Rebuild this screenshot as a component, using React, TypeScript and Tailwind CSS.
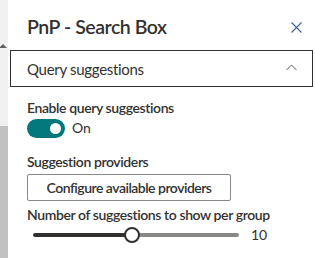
import React from "react";

export default function App() {
  const font = { fontFamily: 'Lato, "Noto Sans", sans-serif' };
  return (
    <div className="w-[315px] h-[258px] flex bg-white overflow-hidden text-[#323130]" style={font}>
      {/* scrollbar strip */}
      <div className="w-[8px] shrink-0 flex flex-col">
        <div className="h-[126px] shrink-0 bg-[#f0f0f0] relative">
          <div className="absolute left-0 top-[44px] w-0 h-0 border-l-[4px] border-r-[4px] border-b-[4px] border-l-transparent border-r-transparent border-b-[#606060] -ml-[1px]" />
        </div>
        <div className="flex-1 bg-[#c1c1c1]" />
      </div>
      {/* panel */}
      <div className="flex-1 pl-[2px] pr-[2px]">
        <div className="h-[50px] flex items-start justify-between pl-[17px] pr-[11px]">
          <div className="mt-[13px] text-[19.5px] leading-[28px] font-semibold tracking-[-0.45px] text-[#323130]">PnP - Search Box</div>
          <svg className="mt-[22px]" width="11" height="11" viewBox="0 0 11 11">
            <path d="M0.5 0.5 L10.5 10.5 M10.5 0.5 L0.5 10.5" stroke="#35639a" strokeWidth="1.1" fill="none" />
          </svg>
        </div>
        <div className="h-[37px] border border-[#323130] flex items-center justify-between pl-[16px] pr-[15px]">
          <span className="text-[15px] leading-[20px] tracking-[-0.3px]">Query suggestions</span>
          <svg width="11" height="7" viewBox="0 0 11 7" className="-mt-[2px]">
            <path d="M0.5 6 L5.5 1 L10.5 6" stroke="#605e5c" strokeWidth="1" fill="none" />
          </svg>
        </div>
        <div className="flex flex-col pl-[17px]">
          <div className="mt-[11px] text-[14px] leading-[20px] font-semibold tracking-[-0.4px]">Enable query suggestions</div>
          <div className="mt-0 flex items-center gap-[7px]">
            <div className="w-[38px] h-[19px] rounded-full bg-[#03787c] flex items-center justify-end pr-[4px]">
              <div className="w-[11px] h-[11px] rounded-full bg-white" />
            </div>
            <span className="text-[14px] leading-[20px]">On</span>
          </div>
          <div className="mt-[14px] text-[14px] leading-[20px] font-semibold tracking-[-0.4px]">Suggestion providers</div>
          <button className="mt-[2px] w-[204px] h-[27px] border border-[#8a8886] rounded-[2px] text-[14px] font-semibold tracking-[-0.5px] flex items-center justify-center bg-white">
            Configure available providers
          </button>
          <div className="mt-[4px] text-[14px] leading-[20px] font-semibold tracking-[-0.4px] whitespace-nowrap">Number of suggestions to show per group</div>
          <div className="mt-0 h-[20px] flex items-center">
            <div className="ml-[6px] w-[206px] h-[4px] relative flex">
              <div className="w-[99px] h-[4px] bg-[#323130] rounded-l-full" />
              <div className="flex-1 h-[4px] bg-[#8a8886] rounded-r-full" />
              <div className="absolute left-[91px] top-[-6px] w-[16px] h-[16px] rounded-full bg-white border-2 border-[#323130]" />
            </div>
            <span className="ml-[12px] text-[14px] leading-[20px]">10</span>
          </div>
        </div>
      </div>
    </div>
  );
}
